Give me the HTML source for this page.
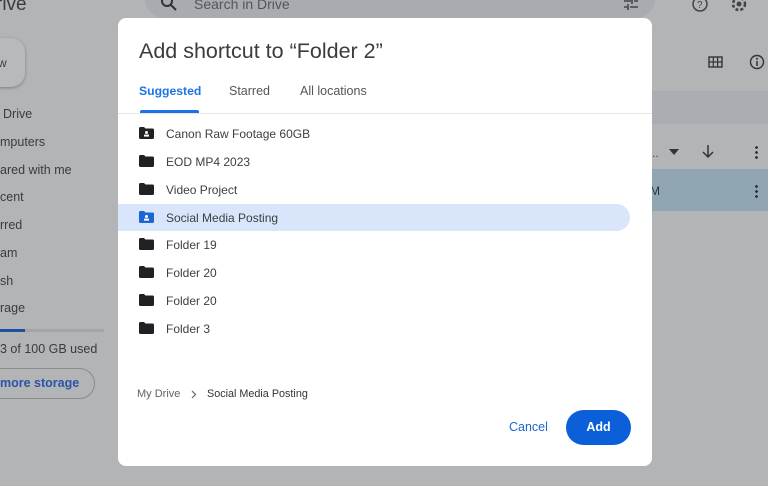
<!DOCTYPE html>
<html><head><meta charset="utf-8"><style>
*{margin:0;padding:0;box-sizing:border-box}
body{width:768px;height:486px;overflow:hidden;background:#b3b4b6;font-family:"Liberation Sans",sans-serif;position:relative;color:#3c3c3c}
.a{position:absolute;white-space:nowrap}
.side{font-size:12.5px;color:#3a3b3d}
.dlg{position:absolute;left:118px;top:18px;width:534px;height:448px;background:#fff;border-radius:8px}
.row{position:absolute;left:0;height:27px;width:512px;font-size:12px;color:#3c4043}
.row svg{position:absolute;left:21px;top:7px}
.row span{position:absolute;left:48px;top:7px}
</style></head><body>
<div class="a" style="left:145px;top:-20px;width:510px;height:38px;background:#a9abb0;border-radius:20px"></div>
<svg class="a" style="left:160px;top:-6px" width="18" height="18" viewBox="0 0 18 18"><circle cx="7" cy="7" r="5" fill="none" stroke="#333" stroke-width="2"/><path d="M11 11l5 5" stroke="#333" stroke-width="2"/></svg>
<div class="a" style="left:194px;top:-4px;font-size:14px;color:#555">Search in Drive</div>
<svg class="a" style="left:623px;top:-2px" width="16" height="14"><path d="M1 3h7M11 3h4M1 9h3M7 9h8M9 0v6M5 6v6" stroke="#444" stroke-width="1.6"/></svg>
<svg class="a" style="left:691px;top:-5px" width="18" height="18"><circle cx="9" cy="9" r="7" fill="none" stroke="#444" stroke-width="1.5"/><text x="6" y="13" font-size="10" fill="#444" font-family="Liberation Sans">?</text></svg>
<svg class="a" style="left:730px;top:-5px" width="18" height="18"><circle cx="9" cy="9" r="6" fill="none" stroke="#444" stroke-width="2.5" stroke-dasharray="3 2"/><circle cx="9" cy="9" r="2.5" fill="#444"/></svg>
<div class="a" style="left:-4px;top:-6px;font-size:19px;color:#3a3b3d">rive</div>
<div class="a" style="left:-30px;top:38px;width:55px;height:49px;border-radius:14px;background:#b8b9bb;box-shadow:0 1px 3px rgba(0,0,0,.3)"></div>
<div class="a side" style="left:-2px;top:56px;font-size:12px">w</div>
<div class="a side" style="left:3px;top:107px">Drive</div>
<div class="a side" style="left:0;top:135px">mputers</div>
<div class="a side" style="left:0;top:163px">ared with me</div>
<div class="a side" style="left:0;top:190px">cent</div>
<div class="a side" style="left:0;top:218px">rred</div>
<div class="a side" style="left:0;top:246px">am</div>
<div class="a side" style="left:0;top:274px">sh</div>
<div class="a side" style="left:0;top:301px">rage</div>
<div class="a" style="left:0;top:329px;width:104px;height:3px;background:#a3a4a6"></div>
<div class="a" style="left:0;top:329px;width:25px;height:3px;background:#1f4fa0"></div>
<div class="a side" style="left:0;top:342px">3 of 100 GB used</div>
<div class="a" style="left:-40px;top:368px;width:135px;height:31px;border:1px solid #8a8b8d;border-radius:16px"></div>
<div class="a" style="left:0;top:376px;font-size:12.5px;color:#2856a8;font-weight:bold">more storage</div>
<svg class="a" style="left:708px;top:56px" width="15" height="12"><rect x="1" y="1" width="13" height="10" fill="none" stroke="#333" stroke-width="1.4"/><path d="M1 6h13M5.3 1v10M9.6 1v10" stroke="#333" stroke-width="1.2"/></svg>
<svg class="a" style="left:749px;top:54px" width="16" height="16"><circle cx="8" cy="8" r="6.5" fill="none" stroke="#333" stroke-width="1.4"/><path d="M8 7v5" stroke="#333" stroke-width="1.5"/><circle cx="8" cy="4.8" r="1" fill="#333"/></svg>
<div class="a" style="left:652px;top:91px;width:116px;height:33px;background:#abadb2"></div>
<div class="a" style="left:652px;top:146px;font-size:12px;color:#444">..</div>
<svg class="a" style="left:669px;top:149px" width="10" height="6"><path d="M0 0h10L5 6z" fill="#333"/></svg>
<svg class="a" style="left:702px;top:145px" width="12" height="14"><path d="M6 0v12M1 7l5 5 5-5" fill="none" stroke="#333" stroke-width="1.5"/></svg>
<div class="a" style="left:755px;top:145px;width:3px;height:14px;background:radial-gradient(circle,#333 1.3px,transparent 1.5px) 0 0/3px 5px"></div>
<div class="a" style="left:652px;top:169px;width:116px;height:42px;background:#8fa5b2"></div>
<div class="a" style="left:650px;top:184px;font-size:12px;color:#333">M</div>
<div class="a" style="left:755px;top:184px;width:3px;height:14px;background:radial-gradient(circle,#333 1.3px,transparent 1.5px) 0 0/3px 5px"></div>

<div class="dlg">
<div class="a" style="left:21px;top:21px;font-size:21.5px;color:#3c3c3c">Add shortcut to “Folder 2”</div>
<div class="a" style="left:21px;top:66px;font-size:12.2px;color:#1a73e8;font-weight:bold">Suggested</div>
<div class="a" style="left:111px;top:66px;font-size:12.5px;color:#555">Starred</div>
<div class="a" style="left:182px;top:66px;font-size:12.5px;color:#555">All locations</div>
<div class="a" style="left:22px;top:92px;width:59px;height:3px;background:#1a73e8;border-radius:2px 2px 0 0"></div>
<div class="a" style="left:0;top:95px;width:534px;height:1px;background:#e6e6e6"></div>
<div class="row" style="top:102px"><svg width="15" height="12"><path d="M0 1.5Q0 0 1.5 0H5l1.5 1.5h7Q15 1.5 15 3v7.5Q15 12 13.5 12h-12Q0 12 0 10.5z" fill="#202124"/><circle cx="7.5" cy="5.5" r="1.5" fill="#fff"/><rect x="5" y="7.6" width="5" height="2" fill="#fff"/></svg><span>Canon Raw Footage 60GB</span></div>
<div class="row" style="top:130px"><svg width="15" height="12"><path d="M0 1.5Q0 0 1.5 0H5l1.5 1.5h7Q15 1.5 15 3v7.5Q15 12 13.5 12h-12Q0 12 0 10.5z" fill="#202124"/></svg><span>EOD MP4 2023</span></div>
<div class="row" style="top:158px"><svg width="15" height="12"><path d="M0 1.5Q0 0 1.5 0H5l1.5 1.5h7Q15 1.5 15 3v7.5Q15 12 13.5 12h-12Q0 12 0 10.5z" fill="#202124"/></svg><span>Video Project</span></div>
<div class="row" style="top:186px;background:#d8e5fb;border-radius:0 14px 14px 0"><svg width="15" height="12"><path d="M0 1.5Q0 0 1.5 0H5l1.5 1.5h7Q15 1.5 15 3v7.5Q15 12 13.5 12h-12Q0 12 0 10.5z" fill="#1a66d2"/><circle cx="7.5" cy="5.5" r="1.5" fill="#fff"/><rect x="5" y="7.6" width="5" height="2" fill="#fff"/></svg><span>Social Media Posting</span></div>
<div class="row" style="top:213px"><svg width="15" height="12"><path d="M0 1.5Q0 0 1.5 0H5l1.5 1.5h7Q15 1.5 15 3v7.5Q15 12 13.5 12h-12Q0 12 0 10.5z" fill="#202124"/></svg><span>Folder 19</span></div>
<div class="row" style="top:241px"><svg width="15" height="12"><path d="M0 1.5Q0 0 1.5 0H5l1.5 1.5h7Q15 1.5 15 3v7.5Q15 12 13.5 12h-12Q0 12 0 10.5z" fill="#202124"/></svg><span>Folder 20</span></div>
<div class="row" style="top:269px"><svg width="15" height="12"><path d="M0 1.5Q0 0 1.5 0H5l1.5 1.5h7Q15 1.5 15 3v7.5Q15 12 13.5 12h-12Q0 12 0 10.5z" fill="#202124"/></svg><span>Folder 20</span></div>
<div class="row" style="top:297px"><svg width="15" height="12"><path d="M0 1.5Q0 0 1.5 0H5l1.5 1.5h7Q15 1.5 15 3v7.5Q15 12 13.5 12h-12Q0 12 0 10.5z" fill="#202124"/></svg><span>Folder 3</span></div>
<div class="a" style="left:19px;top:370px;font-size:11px;color:#5f6368">My Drive</div>
<svg class="a" style="left:73px;top:372px" width="6" height="9"><path d="M1 1l3.5 3.5L1 8" fill="none" stroke="#5f6368" stroke-width="1.2"/></svg>
<div class="a" style="left:89px;top:370px;font-size:10.8px;color:#333">Social Media Posting</div>
<div class="a" style="left:391px;top:402px;font-size:12.5px;color:#1a66d2">Cancel</div>
<div class="a" style="left:448px;top:392px;width:65px;height:35px;border-radius:18px;background:#0b5fd8;color:#fff;font-size:12.5px;font-weight:bold;text-align:center;line-height:35px">Add</div>
</div>
</body></html>
